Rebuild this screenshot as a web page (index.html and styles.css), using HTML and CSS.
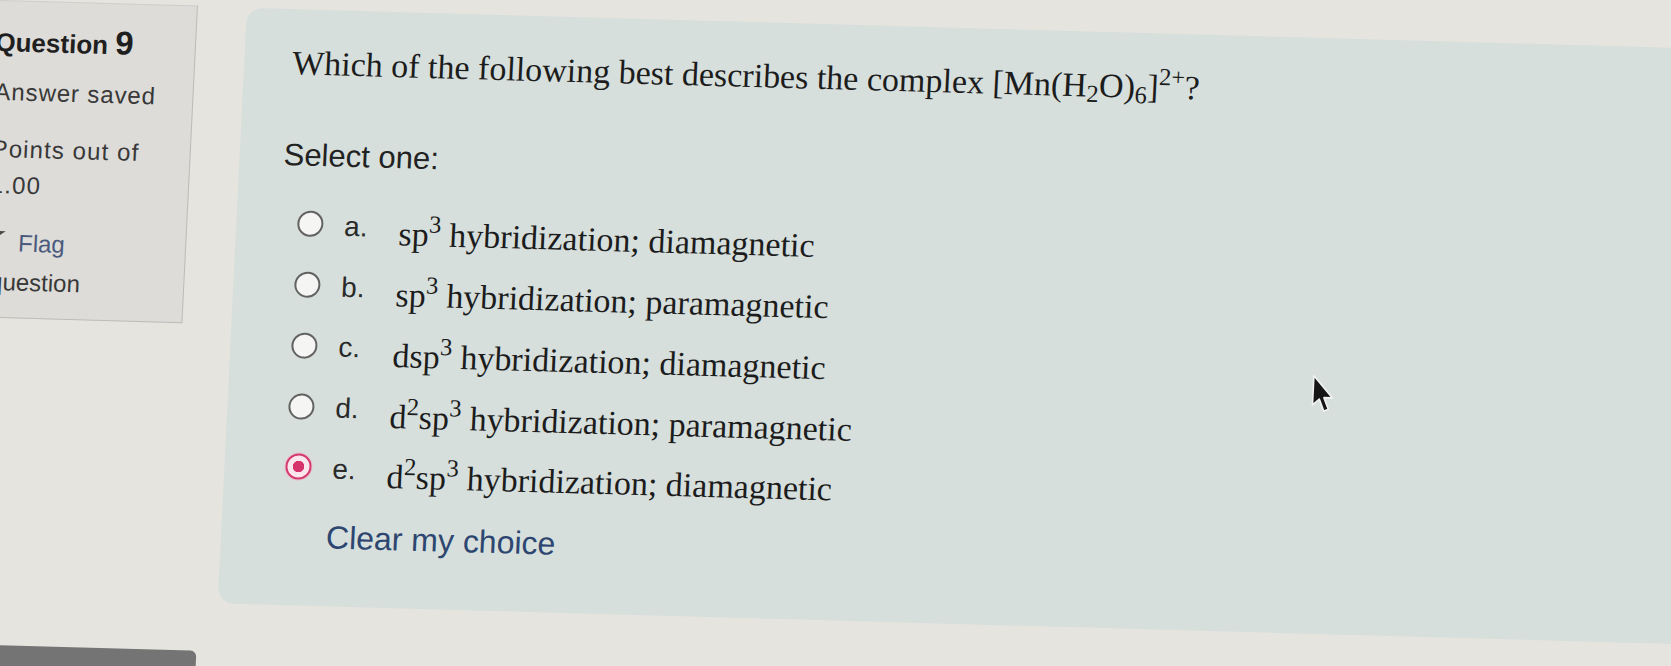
FILE: index.html
```html
<!DOCTYPE html>
<html lang="en">
<head>
<meta charset="utf-8">
<title>Question 9</title>
<link rel="stylesheet" href="styles.css">
</head>
<body>
<div class="page">
  <div class="row">
    <aside class="info">
      <h3 class="qno">Question <span class="num">9</span></h3>
      <div class="state">Answer saved</div>
      <div class="grade"><span>Points out of</span><span>1.00</span></div>
      <div class="flag">
        <span class="l1"><svg class="flag-ico" width="18" height="12" viewBox="0 0 18 12"><polygon points="2,1 14,1 3,9" fill="#4a4a4a"/></svg>Flag</span>
        <span class="l2">question</span>
      </div>
    </aside>
    <main class="panel">
      <p class="qtext">Which of the following best describes the complex [Mn(H<sub>2</sub>O)<sub>6</sub>]<sup>2+</sup>?</p>
      <p class="prompt">Select one:</p>
      <div class="answers">
        <label class="opt"><span class="radio"></span><span class="letter">a.</span><span class="ans">sp<sup>3</sup> hybridization; diamagnetic</span></label>
        <label class="opt"><span class="radio"></span><span class="letter">b.</span><span class="ans">sp<sup>3</sup> hybridization; paramagnetic</span></label>
        <label class="opt"><span class="radio"></span><span class="letter">c.</span><span class="ans">dsp<sup>3</sup> hybridization; diamagnetic</span></label>
        <label class="opt"><span class="radio"></span><span class="letter">d.</span><span class="ans">d<sup>2</sup>sp<sup>3</sup> hybridization; paramagnetic</span></label>
        <label class="opt"><span class="radio checked"></span><span class="letter">e.</span><span class="ans">d<sup>2</sup>sp<sup>3</sup> hybridization; diamagnetic</span></label>
      </div>
      <a class="clear">Clear my choice</a>
      <svg class="cursor" width="26" height="40" viewBox="0 0 26 40"><path d="M3 2 L3 31 L9.5 25 L14.5 37 L19 35 L14 23.5 L22.5 23.5 Z" fill="#161616" stroke="#f2f2f2" stroke-width="1.6" stroke-linejoin="round"/></svg>
    </main>
  </div>
  <div class="footer"></div>
</div>
</body>
</html>
```
FILE: styles.css
```css
html, body {
  margin: 0;
  padding: 0;
  width: 1671px;
  height: 666px;
  overflow: hidden;
}
body {
  background: #e6e4df;
  font-family: "Liberation Sans", Arial, sans-serif;
  color: #2c2c2c;
}
.page {
  width: 2000px;
  height: 720px;
  display: flex;
  flex-direction: column;
  transform-origin: 0 0;
  transform: rotate(1.6deg) skewX(-1.2deg);
}
.row {
  display: flex;
  align-items: flex-start;
}
.info {
  width: 198px;
  height: 318px;
  flex: none;
  box-sizing: border-box;
  background: #dddcd9;
  border-top: 1px solid #d0cfcc;
  border-right: 1px solid #bdbcb9;
  border-bottom: 1px solid #bdbcb9;
  padding-top: 22.5px;
  font-size: 24px;
  color: #383838;
  overflow: hidden;
}
.qno {
  margin: 0 0 0 -2.5px;
  font-size: 26px;
  line-height: 36px;
  font-weight: bold;
  color: #1f1f1f;
}
.qno .num {
  font-size: 33px;
  line-height: 0;
}
.state {
  margin: 14px 0 0 -1px;
  line-height: 36px;
  letter-spacing: 0.9px;
}
.grade {
  margin: 21px 0 0 -1px;
  display: flex;
  flex-direction: column;
  line-height: 36px;
  letter-spacing: 1.1px;
}
.flag {
  margin: 20.5px 0 0 3px;
  display: flex;
  flex-direction: column;
  line-height: 39px;
}
.flag .l1 {
  display: flex;
  align-items: center;
  color: #4b5a7c;
}
.flag-ico {
  margin: -14px 9px 0 0;
}
.panel {
  position: relative;
  flex: none;
  width: 1500px;
  height: 596px;
  margin: 1px 0 0 49px;
  box-sizing: border-box;
  padding: 31.5px 0 0 48px;
  background: #d6dfdc;
  border-radius: 16px 0 0 16px;
}
.qtext {
  margin: 0;
  font-family: "Liberation Serif", "Times New Roman", serif;
  font-size: 34px;
  line-height: 44px;
  color: #1c1c1c;
  white-space: nowrap;
}
sub, sup {
  font-size: 72%;
  line-height: 0;
}
sub { vertical-align: -0.22em; }
sup { vertical-align: 0.55em; }
.prompt {
  margin: 50.8px 0 0 -4px;
  font-size: 31px;
  line-height: 40px;
  color: #222;
}
.answers {
  margin-top: 17.7px;
  display: flex;
  flex-direction: column;
}
.opt {
  display: flex;
  align-items: flex-start;
  height: 60.75px;
}
.radio {
  flex: none;
  width: 26px;
  height: 26px;
  margin: 17.4px 0 0 12.5px;
  box-sizing: border-box;
  border: 2px solid #626262;
  border-radius: 50%;
  background: #f5f6f4;
}
.radio.checked {
  border: 2.5px solid #d43a70;
  background: radial-gradient(circle, #d6336c 0 5.5px, #fbe6ee 6px 100%);
  box-shadow: 0 0 0 1px #ecbccc;
}
.letter {
  flex: none;
  width: 54.5px;
  margin: 17.9px 0 0 21.5px;
  font-size: 28px;
  line-height: 28px;
  color: #2a2a2a;
}
.ans {
  margin-top: 18.5px;
  font-family: "Liberation Serif", "Times New Roman", serif;
  font-size: 34px;
  line-height: 40px;
  color: #1c1c1c;
  white-space: nowrap;
}
.clear {
  display: inline-block;
  margin: 19px 0 0 57px;
  font-size: 32px;
  line-height: 40px;
  color: #2d4670;
  align-self: flex-start;
}
.cursor {
  position: absolute;
  left: 1081px;
  top: 336px;
}
.footer {
  flex: none;
  margin: 48px 0 0 -40px;
  width: 268px;
  height: 60px;
  background: #747474;
  border-top-right-radius: 6px;
}
```
